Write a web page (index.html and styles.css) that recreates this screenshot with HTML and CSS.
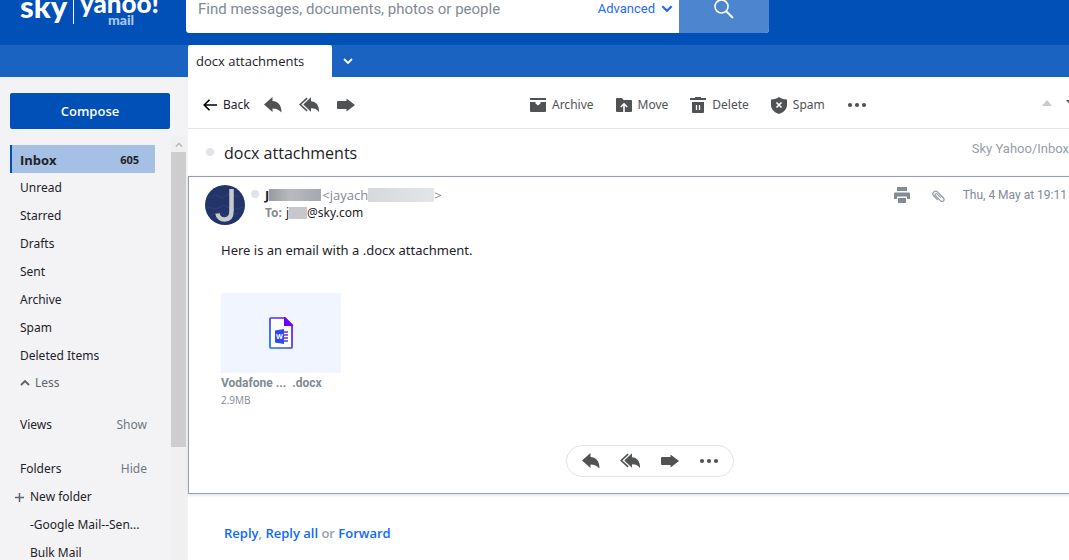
FILE: index.html
```html
<!DOCTYPE html>
<html lang="en">
<head>
    <meta charset="UTF-8">
    <meta name="viewport" content="width=device-width, initial-scale=1.0">
    <title>Sky Yahoo Mail</title>
    <link rel="stylesheet" href="styles.css">
</head>
<body>
    <svg class="sprite" aria-hidden="true">
        <symbol id="reply" viewBox="0 0 18 16">
            <path d="M0 7.500 8.500 0v4c5.300.3 9.100 3.700 9 11.600-2.500-3.200-5-4.200-9-4.200V15z"/>
        </symbol>
        <symbol id="reply-all" viewBox="0 0 22 16">
            <path d="M4.500 7.500 12.500 0v4c5 .3 8.700 3.700 8.600 11.600-2.400-3.200-4.800-4.200-8.600-4.200V15z"/>
            <path d="M8.500.8 1.300 7.500l7.200 6.700" fill="none" stroke="currentColor" stroke-width="1.700"/>
        </symbol>
        <symbol id="forward" viewBox="0 0 18 14">
            <path d="M1 3h8.500V.5L18 7l-8.500 6.500V11H1Q0 11 0 10V4Q0 3 1 3z"/>
        </symbol>
        <symbol id="dots" viewBox="0 0 20 6">
            <circle cx="3" cy="3" r="2.100"/><circle cx="10" cy="3" r="2.100"/><circle cx="17" cy="3" r="2.100"/>
        </symbol>
        <symbol id="chevron" viewBox="0 0 10 6">
            <path d="M1 1l4 4 4-4" fill="none" stroke="currentColor" stroke-width="1.800"/>
        </symbol>
    </svg>

    <header class="header">
        <a class="logo" href="#">
            <span class="logo-sky">sky</span>
            <span class="logo-yahoo">yahoo!<small>mail</small></span>
        </a>
        <form class="search">
            <input class="search-input" type="text" aria-label="Search mail" placeholder="Find messages, documents, photos or people">
            <button class="advanced" type="button">Advanced <svg width="12" height="7"><use href="#chevron"/></svg></button>
            <button class="search-button" type="button" aria-label="Search">
                <svg width="20" height="20" viewBox="0 0 20 20" fill="none" stroke="#fff" stroke-width="1.600"><circle cx="7.500" cy="7.500" r="6.500"/><path d="M12.200 12.200 19 19" stroke-width="2"/></svg>
            </button>
        </form>
    </header>

    <div class="tabs">
        <button class="tab" type="button">docx attachments</button>
        <button class="tab-more" type="button" aria-label="More tabs"><svg width="10" height="6"><use href="#chevron"/></svg></button>
    </div>

    <div class="app">
        <aside class="sidebar">
            <button class="compose" type="button">Compose</button>
            <div class="folder-pane">
                <nav class="folders">
                    <a class="folder active" href="#">Inbox <span class="count">605</span></a>
                    <a class="folder" href="#">Unread</a>
                    <a class="folder" href="#">Starred</a>
                    <a class="folder" href="#">Drafts</a>
                    <a class="folder" href="#">Sent</a>
                    <a class="folder" href="#">Archive</a>
                    <a class="folder" href="#">Spam</a>
                    <a class="folder" href="#">Deleted Items</a>
                    <button class="less" type="button"><svg class="flip" width="10" height="6"><use href="#chevron"/></svg>Less</button>
                    <div class="group"><span>Views</span><button type="button">Show</button></div>
                    <div class="group"><span>Folders</span><button type="button">Hide</button></div>
                    <button class="new-folder" type="button">
                        <svg width="9" height="9" viewBox="0 0 9 9" stroke="#5b636a" stroke-width="1.500"><path d="M4.500 0v9M0 4.500h9"/></svg>New folder
                    </button>
                    <a class="folder sub" href="#">-Google Mail--Sen...</a>
                    <a class="folder sub" href="#">Bulk Mail</a>
                </nav>
                <div class="scrollbar">
                    <svg class="flip" width="8" height="6"><use href="#chevron"/></svg>
                    <div class="thumb"></div>
                </div>
            </div>
        </aside>

        <main class="main">
            <div class="toolbar">
                <div class="tools-left">
                    <button class="back" type="button">
                        <svg width="14" height="12" viewBox="0 0 14 12" fill="none" stroke="#000" stroke-width="1.600"><path d="M6.500.8 1.200 6l5.300 5.200M1.200 6H14"/></svg>Back
                    </button>
                    <button type="button" aria-label="Reply"><svg width="18" height="16"><use href="#reply"/></svg></button>
                    <button type="button" aria-label="Reply all"><svg width="21" height="16"><use href="#reply-all"/></svg></button>
                    <button type="button" aria-label="Forward"><svg width="18" height="14"><use href="#forward"/></svg></button>
                </div>
                <div class="tools-center">
                    <button type="button">
                        <svg width="16" height="14" viewBox="0 0 16 14"><path d="M0 0h16v2H0zM0 4h5.500v1.500L8 7.500l2.500-2V4H16v9q0 1-1 1H1q-1 0-1-1z"/></svg>Archive
                    </button>
                    <button type="button">
                        <svg width="16" height="14" viewBox="0 0 16 14"><path d="M1 0h5l1.500 2H15q1 0 1 1v10q0 1-1 1H1q-1 0-1-1V1q0-1 1-1z"/><path d="M8 14V6.500M4.800 9 8 5.800 11.200 9" fill="none" stroke="#fff" stroke-width="1.600"/></svg>Move
                    </button>
                    <button type="button">
                        <svg width="16" height="16" viewBox="0 0 16 16"><path d="M5 0h6v1h5v2H0V1h5zM2 5h12v10q0 1-1 1H3q-1 0-1-1z"/><path d="M6.500 8v5M9.500 8v5" stroke="#fff" stroke-width="1.300"/></svg>Delete
                    </button>
                    <button type="button">
                        <svg width="16" height="17" viewBox="0 0 16 17"><path d="M8 0c2 1.600 4.500 2.400 8 2.400V8c0 4-3 7.300-8 9-5-1.700-8-5-8-9V2.400C3.500 2.400 6 1.600 8 0z"/><path d="m5.500 5.500 5 5m0-5-5 5" stroke="#fff" stroke-width="1.700"/></svg>Spam
                    </button>
                    <button type="button" aria-label="More"><svg width="20" height="6"><use href="#dots"/></svg></button>
                </div>
                <div class="pager">
                    <button class="prev" type="button" aria-label="Previous message"><svg width="10" height="6" viewBox="0 0 10 6"><path d="M0 6l5-6 5 6z"/></svg></button>
                    <button class="next" type="button" aria-label="Next message"><svg width="10" height="6" viewBox="0 0 10 6"><path d="M0 0h10L5 6z"/></svg></button>
                </div>
            </div>

            <div class="subject">
                <span class="dot"></span>
                <h1>docx attachments</h1>
                <span class="location">Sky Yahoo/Inbox</span>
            </div>

            <article class="message">
                <div class="message-head">
                    <svg class="avatar" width="40" height="40" viewBox="0 0 40 40">
                        <circle cx="20" cy="20" r="20" fill="#23346b"/>
                        <path d="M3 13l8-3 6 3 8-5 9 4M2 22l9 2 8-4 9 5 10-3M5 31l8-4 9 4 12-3" fill="none" stroke="#2f4176"/>
                        <path d="M26.500 4v22c0 6-3 8.500-7 8.500-3.500 0-6.500-2-7-6" fill="none" stroke="#c9cacb" stroke-width="4.500"/>
                    </svg>
                    <div class="people">
                        <div class="from"><span class="dot"></span><b>J</b><span class="mask mask-name"></span><span class="address">&lt;jayach</span><span class="mask mask-address"></span><span class="address">&gt;</span></div>
                        <div class="to"><b>To:</b> j<span class="mask mask-to"></span>@sky.com</div>
                    </div>
                    <div class="meta">
                        <button type="button" aria-label="Print">
                            <svg width="16" height="16" viewBox="0 0 16 16"><path d="M3 0h10v4H3zM1 5.500h14q1 0 1 1V12h-3V9.500H3V12H0V6.500q0-1 1-1zM4 11h8v5H4z"/></svg>
                        </button>
                        <svg class="clip" width="13" height="13" viewBox="0 0 13 13" fill="none" stroke="#979ea8" stroke-width="1.200"><path d="M8.800 7.600 4.900 3.900C3.700 2.900 2.300 4.300 3.400 5.500l5.200 5.300c2.100 1.800 4.600-.8 2.900-2.800L5.600 2C3-.2-.6 3 1.400 5.500l4.400 4.600"/></svg>
                        <time>Thu, 4 May at 19:11</time>
                    </div>
                </div>

                <p class="body-text">Here is an email with a .docx attachment.</p>

                <a class="attachment" href="#">
                    <span class="preview">
                        <svg width="24" height="32" viewBox="0 0 24 32">
                            <defs>
                                <linearGradient id="doc" x1="1" y1="0" x2="0" y2="1"><stop offset="0" stop-color="#7000f8"/><stop offset="1" stop-color="#0f78ff"/></linearGradient>
                            </defs>
                            <path d="M2 1h14l7 7v22q0 1-1 1H2q-1 0-1-1V2q0-1 1-1z" fill="#fff" stroke="url(#doc)" stroke-width="1.700"/>
                            <path d="M15 0h1l8 8v1h-9z" fill="#7000ff"/>
                            <path d="M6 13.500 15 12v15l-9-1.500z" fill="#3047f2"/>
                            <path d="M15 15h4M15 18h4M15 21h4M15 24h4" stroke="#5b32ee" stroke-width="1.500"/>
                            <text x="7" y="22" fill="#fff" font-family="Open Sans" font-size="7" font-weight="700">W</text>
                        </svg>
                    </span>
                    <span class="file-name"><span>Vodafone ...</span><span>.docx</span></span>
                    <span class="file-size">2.9MB</span>
                </a>

                <div class="quick-actions">
                    <button type="button" aria-label="Reply"><svg width="18" height="16"><use href="#reply"/></svg></button>
                    <button type="button" aria-label="Reply all"><svg width="21" height="16"><use href="#reply-all"/></svg></button>
                    <button type="button" aria-label="Forward"><svg width="18" height="14"><use href="#forward"/></svg></button>
                    <button type="button" aria-label="More"><svg width="20" height="6"><use href="#dots"/></svg></button>
                </div>
            </article>

            <p class="respond"><a href="#">Reply</a>, <a href="#">Reply all</a> or <a href="#">Forward</a></p>
        </main>
    </div>
</body>
</html>
```
FILE: styles.css
```css
* {
    box-sizing: border-box;
}

body {
    margin: 0;
    height: 100vh;
    display: flex;
    flex-direction: column;
    overflow: hidden;
    background: #fff;
    color: #1d2228;
    font-family: "Open Sans", "Noto Sans", sans-serif;
    font-size: 13px;
    line-height: 18px;
}

button {
    display: flex;
    align-items: center;
    padding: 0;
    border: 0;
    background: none;
    color: inherit;
    font: inherit;
    cursor: pointer;
}

a {
    color: inherit;
    text-decoration: none;
}

svg {
    display: block;
    flex: none;
}

svg:not([fill]) {
    fill: currentColor;
}

.sprite {
    display: none;
}

.flip {
    transform: rotate(180deg);
}

/* Header */
.header {
    display: flex;
    align-items: flex-start;
    flex: none;
    height: 45px;
    background: #0050b8;
}

.logo {
    display: flex;
    width: 186px;
    padding-left: 20px;
    margin-top: -12px;
    color: #fff;
    font-family: Lato, sans-serif;
    font-weight: 900;
}

.logo-sky {
    width: 54px;
    height: 36px;
    border-right: 1px solid #fff;
    font-size: 31px;
    line-height: 36px;
}

.logo-yahoo {
    padding-left: 6px;
    font-size: 26px;
    line-height: 30px;
}

.logo-yahoo small {
    display: block;
    padding-left: 28px;
    margin-top: -4px;
    color: #a9c6ea;
    font-size: 14px;
    line-height: 12px;
}

.search {
    display: flex;
    width: 583px;
    height: 46px;
    margin-top: -13px;
    border-radius: 4px;
    overflow: hidden;
    background: #fff;
}

.search-input {
    flex: 1;
    min-width: 0;
    padding: 0 12px 2px;
    border: 0;
    font: 15px Roboto, sans-serif;
}

.search-input::placeholder {
    color: #828a93;
}

.advanced {
    gap: 6px;
    padding-right: 6px;
    padding-bottom: 3px;
    color: #1f69ff;
    font: 13px Roboto, sans-serif;
}

.search-button {
    width: 90px;
    justify-content: center;
    padding-bottom: 2px;
    background: #4d86cf;
}

/* Tabs */
.tabs {
    display: flex;
    flex: none;
    height: 32px;
    padding-left: 188px;
    background: #1a63c0;
}

.tab {
    width: 144px;
    padding-left: 8px;
    border-radius: 2px 2px 0 0;
    background: #fff;
}

.tab-more {
    padding: 0 11px;
    color: #fff;
}

.app {
    display: flex;
    flex: 1;
    min-height: 0;
}

/* Sidebar */
.sidebar {
    display: flex;
    flex-direction: column;
    flex: none;
    width: 188px;
    padding: 16px 2px 0 10px;
    background: #f3f3f6;
}

.compose {
    flex: none;
    justify-content: center;
    width: 160px;
    height: 36px;
    border-radius: 2px;
    background: #0050b8;
    color: #fff;
    font-weight: 600;
}

.folder-pane {
    display: flex;
    flex: 1;
    justify-content: space-between;
    min-height: 0;
    padding-top: 8px;
}

.folders {
    width: 145px;
    padding-top: 8px;
    font-family: "Noto Sans", sans-serif;
    font-size: 12px;
}

.folder {
    display: flex;
    align-items: center;
    justify-content: space-between;
    height: 28px;
    padding: 1px 16px 0 10px;
}

.folder.active {
    padding-left: 8px;
    border-left: 2px solid #0050b8;
    background: #a6bfe4;
    font-family: "Open Sans", sans-serif;
    font-size: 13px;
    font-weight: 700;
}

.count {
    font-size: 11px;
}

.folder.sub {
    padding: 0 0 0 20px;
}

.less {
    gap: 5px;
    height: 26px;
    padding: 2px 0 0 10px;
    color: #5b636a;
}

.group {
    display: flex;
    align-items: center;
    justify-content: space-between;
    height: 28px;
    margin-top: 16px;
    padding: 0 8px 0 10px;
}

.group button {
    color: #6e7780;
}

.new-folder {
    gap: 6px;
    height: 28px;
    padding-left: 5px;
}

.scrollbar {
    width: 15px;
    background: #f0f0f0;
}

.scrollbar svg {
    margin: 5px auto 4px;
    color: #b8b8b8;
}

.thumb {
    height: 295px;
    background: #cdcdcd;
}

/* Reading pane */
.main {
    flex: 1;
    min-width: 0;
}

.toolbar {
    display: flex;
    align-items: center;
    justify-content: space-between;
    height: 52px;
    padding: 5px 0 0 15px;
    border-bottom: 1px solid #e0e4e9;
    overflow: hidden;
    color: #505254;
    font-family: "Noto Sans", sans-serif;
    font-size: 12px;
}

.tools-left,
.tools-center,
.pager {
    display: flex;
    align-items: center;
}

.tools-left {
    gap: 17px;
}

.back {
    gap: 6px;
    margin-right: -3px;
    color: #1d2228;
}

.tools-center {
    gap: 22px;
}

.tools-center button {
    gap: 6px;
}

.pager {
    gap: 14px;
    margin-right: -7px;
    padding-bottom: 4px;
}

.prev {
    color: #c7c9cb;
}

.subject {
    display: flex;
    align-items: center;
    height: 47px;
    padding-left: 18px;
}

.dot {
    flex: none;
    width: 8px;
    height: 8px;
    margin-bottom: 2px;
    border-radius: 50%;
    background: #e0e4e9;
}

h1 {
    flex: 1;
    margin: 0 0 0 10px;
    font-size: 16px;
    font-weight: 400;
    line-height: 24px;
}

.location {
    padding-bottom: 8px;
    color: #979ea8;
    font-family: Roboto, sans-serif;
}

/* the pane is wider than the window and runs off its right edge */
.message {
    display: flex;
    flex-direction: column;
    min-height: 318px;
    margin-right: -28px;
    padding: 8px 2px 16px 16px;
    border: 1px solid #979eab;
    box-shadow: 0 1px 3px #d8dade;
}

.message-head {
    display: flex;
    align-items: flex-start;
    padding-right: 27px;
}

.people {
    padding: 1px 0 0 6px;
}

.from,
.to {
    display: flex;
    align-items: center;
    height: 18px;
}

.from b {
    margin-left: 6px;
}

.address,
.meta {
    color: #828a93;
}

.to {
    padding-left: 14px;
    font-family: "Noto Sans", sans-serif;
    font-size: 12px;
}

.to b {
    margin-right: 4px;
    color: #828a93;
}

.mask {
    height: 12px;
}

.mask-name {
    width: 52px;
    margin-right: 1px;
    background: linear-gradient(90deg, #989a9d, #b9babd 40%, #a5a8af);
}

.mask-address {
    width: 66px;
    height: 14px;
    background: linear-gradient(90deg, #d6d9db, #e3e5e8);
}

.mask-to {
    width: 18px;
    background: #c9c7cc;
}

.meta {
    display: flex;
    align-items: center;
    margin-left: auto;
    padding-top: 1px;
    font-family: Roboto, sans-serif;
    font-size: 12px;
}

.clip {
    margin: 2px 18px 0 22px;
}

.body-text {
    margin: 16px 0 0 16px;
    font-family: "Noto Sans", sans-serif;
}

.attachment {
    display: flex;
    flex-direction: column;
    width: 120px;
    margin: 34px 0 0 16px;
    color: #828a93;
}

.preview {
    display: flex;
    align-items: center;
    justify-content: center;
    height: 80px;
    background: #f0f5ff;
}

.file-name {
    display: flex;
    gap: 6px;
    padding-top: 1px;
    font-family: Roboto, sans-serif;
    font-size: 12px;
    font-weight: 700;
}

.file-size {
    font-size: 10px;
    line-height: 16px;
}

.quick-actions {
    display: flex;
    align-items: center;
    justify-content: space-between;
    width: 168px;
    height: 32px;
    margin: auto auto 0;
    padding: 0 13px 0 15px;
    border: 1px solid #e0e4e9;
    border-radius: 16px;
    color: #505254;
}

.respond {
    margin: 30px 0 0 36px;
    color: #979ea8;
    font-weight: 600;
}
 
.respond a {
    color: #0f69ff;
}
```
